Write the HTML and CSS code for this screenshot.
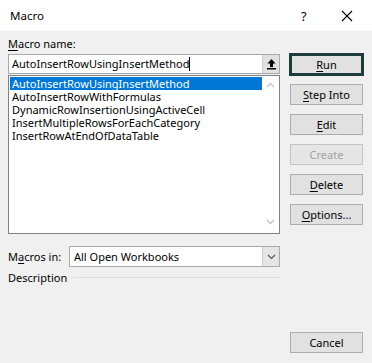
FILE: index.html
```html
<!DOCTYPE html>
<html lang="en">
<head>
<meta charset="UTF-8">
<title>Macro</title>
<link rel="stylesheet" href="styles.css">
</head>
<body>
<div class="dialog">
  <div class="titlebar">
    <span class="title">Macro</span>
    <span class="help">?</span>
    <span class="close">
      <svg width="12" height="12" viewBox="0 0 12 12"><path d="M1 1L11 11M11 1L1 11" stroke="#000" stroke-width="1.1" fill="none"/></svg>
    </span>
  </div>

  <div class="main">
    <div class="left">
      <div class="label"><u>M</u>acro name:</div>
      <div class="nameInput">
        <span class="value">AutoInsertRowUsingInsertMethod</span><span class="caret"></span>
        <span class="upBtn">
          <svg width="11" height="12" viewBox="0 0 11 12"><path d="M5.5 1L1.5 5.5H4V9H7V5.5H9.5Z" fill="#000"/><rect x="1" y="10" width="9" height="1.5" fill="#000"/></svg>
        </span>
      </div>
      <div class="macroList">
        <ul class="items">
          <li class="selected">AutoInsertRowUsingInsertMethod</li>
          <li>AutoInsertRowWithFormulas</li>
          <li>DynamicRowInsertionUsingActiveCell</li>
          <li>InsertMultipleRowsForEachCategory</li>
          <li>InsertRowAtEndOfDataTable</li>
        </ul>
        <div class="scrollbar">
          <svg width="9" height="6" viewBox="0 0 9 6"><path d="M1 5L4.5 1.5L8 5" stroke="#c4c4c4" stroke-width="1.3" fill="none"/></svg>
          <svg width="9" height="6" viewBox="0 0 9 6"><path d="M1 1L4.5 4.5L8 1" stroke="#c4c4c4" stroke-width="1.3" fill="none"/></svg>
        </div>
      </div>
      <div class="macrosIn">
        <span class="label">M<u>a</u>cros in:</span>
        <div class="combo">
          <span class="value">All Open Workbooks</span>
          <span class="dropBtn">
            <svg width="9" height="6" viewBox="0 0 9 6"><path d="M1 1L4.5 4.5L8 1" stroke="#555" stroke-width="1.2" fill="none"/></svg>
          </span>
        </div>
      </div>
      <div class="description">
        <span>Description</span>
        <span class="rule"></span>
      </div>
    </div>

    <div class="right">
      <button class="btn default"><u>R</u>un</button>
      <button class="btn"><u>S</u>tep Into</button>
      <button class="btn"><u>E</u>dit</button>
      <button class="btn disabled">Create</button>
      <button class="btn"><u>D</u>elete</button>
      <button class="btn"><u>O</u>ptions...</button>
      <button class="btn cancel">Cancel</button>
    </div>
  </div>
</div>
</body>
</html>
```

FILE: styles.css
```css
html, body, div, ul, li, button, span {
  margin: 0;
  padding: 0;
  box-sizing: border-box;
}

body {
  background-color: #f0f0f0;
  font-family: "Noto Sans", "Open Sans", sans-serif;
  font-size: 11px;
  color: #000;
}

u {
  text-decoration-thickness: 1px;
  text-underline-offset: 2px;
}

.dialog {
  width: 372px;
  height: 363px;
  display: flex;
  flex-direction: column;
  background-color: #f0f0f0;
}

.titlebar {
  height: 31px;
  background-color: #fff;
  display: flex;
  align-items: center;
  padding-left: 10px;
}

.title {
  flex: 1;
  font-size: 11.5px;
}

.help {
  width: 12px;
  font-size: 13px;
  margin-right: 28px;
}

.close {
  display: flex;
  margin-right: 19px;
}

.main {
  flex: 1;
  display: flex;
  padding: 5px 9px 10px 8px;
  gap: 10px;
}

.left {
  width: 272px;
  display: flex;
  flex-direction: column;
}

.left > .label {
  height: 16px;
  line-height: 16px;
  margin-bottom: 2px;
}

.nameInput {
  height: 20px;
  background-color: #fff;
  border: 1px solid #a9a9a9;
  display: flex;
  align-items: center;
  padding-left: 3px;
}

.nameInput .value {
  line-height: 16px;
}

.caret {
  width: 1px;
  height: 14px;
  background-color: #000;
}

.upBtn {
  margin-left: auto;
  width: 17px;
  height: 18px;
  background-color: #e1e1e1;
  border-left: 1px solid #cfcfcf;
  display: flex;
  align-items: center;
  justify-content: center;
}

.macroList {
  height: 159px;
  margin-top: 1px;
  background-color: #fff;
  border: 1px solid #828282;
  display: flex;
}

.items {
  list-style: none;
  flex: 1;
  padding: 1px 0 0 1px;
}

.items li {
  height: 13px;
  line-height: 13px;
  padding-left: 2px;
}

.items li.selected {
  background-color: #0078d7;
  color: #fff;
}

.scrollbar {
  width: 17px;
  display: flex;
  flex-direction: column;
  justify-content: space-between;
  align-items: center;
  padding: 6px 0 8px;
}

.macrosIn {
  margin-top: 12px;
  display: flex;
  align-items: center;
}

.macrosIn .label {
  width: 61px;
}

.combo {
  flex: 1;
  height: 21px;
  background-color: #fff;
  border: 1px solid #a9a9a9;
  display: flex;
  align-items: center;
  padding-left: 4px;
}

.dropBtn {
  margin-left: auto;
  width: 17px;
  height: 19px;
  background-color: #e5e5e5;
  border-left: 1px solid #cfcfcf;
  display: flex;
  align-items: center;
  justify-content: center;
}

.description {
  margin-top: 2px;
  display: flex;
  align-items: center;
  gap: 6px;
  height: 16px;
}

.rule {
  flex: 1;
  height: 1px;
  background-color: #dcdcdc;
}

.right {
  width: 73px;
  display: flex;
  flex-direction: column;
  gap: 9px;
  padding-top: 18px;
}

.btn {
  width: 73px;
  height: 21px;
  font-family: inherit;
  font-size: 11px;
  color: #000;
  background-color: #e1e1e1;
  border: 1px solid #adadad;
}

.btn.default {
  border: 2px solid #1f3c3d;
  box-shadow: 0 0 0 1px #1f3c3d;
}

.btn.disabled {
  color: #a0a0a0;
  background-color: #e6e6e6;
  border-color: #c4c4c4;
}

.btn.cancel {
  margin-top: auto;
}
```
